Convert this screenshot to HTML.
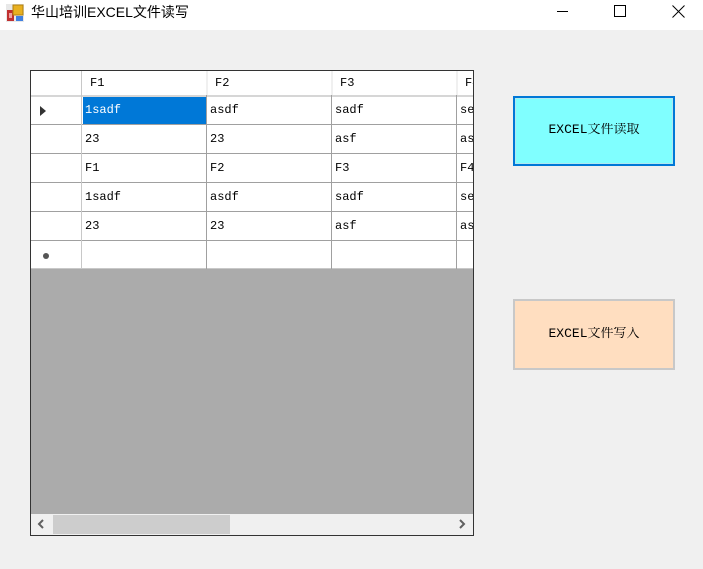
<!DOCTYPE html>
<html><head><meta charset="utf-8"><style>
*{margin:0;padding:0;box-sizing:border-box}
body{width:703px;height:569px;background:#f0f0f0;position:relative;overflow:hidden;font-family:"Liberation Mono","Noto Serif CJK SC",monospace;font-size:12px;color:#000}
.a{position:absolute}
.t{position:absolute;line-height:14px;white-space:nowrap;overflow:hidden}
</style></head><body>
<div class="a" style="left:0;top:0;width:703px;height:30px;background:#fff"></div>
<svg class="a" style="left:6px;top:4px" width="18" height="18" viewBox="0 0 18 18">
<rect x="0" y="0" width="18" height="18" fill="#e8e8e8"/>
<rect x="1" y="6" width="7" height="11" fill="#c03030"/>
<rect x="3" y="9" width="3" height="5" fill="#f0a0a0"/>
<rect x="7" y="1" width="10" height="10" fill="#e8b020" stroke="#b08010"/>
<rect x="10" y="12" width="7" height="5" fill="#4080e0"/>
</svg>
<div class="t" style="left:31px;top:3px;font-family:'Liberation Sans','Noto Sans CJK SC',sans-serif;font-size:14px;line-height:18px">华山培训EXCEL文件读写</div>
<div class="a" style="left:557px;top:11px;width:11px;height:1px;background:#000"></div>
<div class="a" style="left:614px;top:5px;width:12px;height:12px;border:1px solid #000"></div>
<svg class="a" style="left:672px;top:5px" width="13" height="13"><path d="M0.5 0.5L12.5 12.5M12.5 0.5L0.5 12.5" stroke="#000" stroke-width="1"/></svg>

<div class="a" style="left:30px;top:70px;width:444px;height:466px;border:1px solid #333;background:#ababab;overflow:hidden">
<div class="a" style="left:0;top:0;width:442px;height:198px;background:#fff"></div>
<div class="a" style="left:0;top:24px;width:442px;height:2px;background:#d6d6d6"></div>
<div class="a" style="left:0;top:53px;width:442px;height:1px;background:#a0a0a0"></div>
<div class="a" style="left:0;top:82px;width:442px;height:1px;background:#a0a0a0"></div>
<div class="a" style="left:0;top:111px;width:442px;height:1px;background:#a0a0a0"></div>
<div class="a" style="left:0;top:140px;width:442px;height:1px;background:#a0a0a0"></div>
<div class="a" style="left:0;top:169px;width:442px;height:1px;background:#a0a0a0"></div>
<div class="a" style="left:0;top:197px;width:442px;height:1px;background:#c8c8c8"></div>
<div class="a" style="left:50px;top:0;width:1px;height:198px;background:#c8c8c8"></div>
<div class="a" style="left:175px;top:0;width:1px;height:198px;background:#a0a0a0"></div>
<div class="a" style="left:300px;top:0;width:1px;height:198px;background:#a0a0a0"></div>
<div class="a" style="left:425px;top:0;width:1px;height:198px;background:#a0a0a0"></div>
<div class="a" style="left:175px;top:0;width:2px;height:24px;background:#f0f0f0"></div>
<div class="a" style="left:300px;top:0;width:2px;height:24px;background:#f0f0f0"></div>
<div class="a" style="left:425px;top:0;width:2px;height:24px;background:#f0f0f0"></div>
<div class="a" style="left:52px;top:26px;width:123px;height:27px;background:#0078d7"></div>
<div class="a" style="left:9px;top:35px;width:0;height:0;border-left:6px solid #333;border-top:5px solid transparent;border-bottom:5px solid transparent"></div>
<div class="a" style="left:12px;top:182px;width:6px;height:6px;border-radius:3px;background:#555"></div>
<div class="t" style="left:59px;top:5px">F1</div>
<div class="t" style="left:184px;top:5px">F2</div>
<div class="t" style="left:309px;top:5px">F3</div>
<div class="t" style="left:434px;top:5px">F4</div>
<div class="t" style="left:54px;top:32px;color:#fff">1sadf</div>
<div class="t" style="left:179px;top:32px">asdf</div>
<div class="t" style="left:304px;top:32px">sadf</div>
<div class="t" style="left:429px;top:32px;width:13px">sedf</div>
<div class="t" style="left:54px;top:61px">23</div>
<div class="t" style="left:179px;top:61px">23</div>
<div class="t" style="left:304px;top:61px">asf</div>
<div class="t" style="left:429px;top:61px;width:13px">asf</div>
<div class="t" style="left:54px;top:90px">F1</div>
<div class="t" style="left:179px;top:90px">F2</div>
<div class="t" style="left:304px;top:90px">F3</div>
<div class="t" style="left:429px;top:90px;width:13px">F4</div>
<div class="t" style="left:54px;top:119px">1sadf</div>
<div class="t" style="left:179px;top:119px">asdf</div>
<div class="t" style="left:304px;top:119px">sadf</div>
<div class="t" style="left:429px;top:119px;width:13px">sedf</div>
<div class="t" style="left:54px;top:148px">23</div>
<div class="t" style="left:179px;top:148px">23</div>
<div class="t" style="left:304px;top:148px">asf</div>
<div class="t" style="left:429px;top:148px;width:13px">asf</div>
<div class="a" style="left:0;top:443px;width:442px;height:21px;background:#f0f0f0"></div>
<div class="a" style="left:22px;top:444px;width:177px;height:19px;background:#cdcdcd"></div>
<svg class="a" style="left:6px;top:448px" width="8" height="10"><path d="M6 1L2 5L6 9" stroke="#606060" stroke-width="2" fill="none"/></svg>
<svg class="a" style="left:427px;top:448px" width="8" height="10"><path d="M2 1L6 5L2 9" stroke="#606060" stroke-width="2" fill="none"/></svg>
</div>

<div class="a" style="left:513px;top:96px;width:162px;height:70px;background:#80ffff;border:2px solid #0078d7;box-shadow:inset 0 0 0 1px #b0e8f0"></div>
<div class="t" style="left:513px;top:123px;width:162px;text-align:center;font-size:13px">EXCEL文件读取</div>
<div class="a" style="left:513px;top:299px;width:162px;height:71px;background:#ffdec0;border:2px solid #c8c8c8"></div>
<div class="t" style="left:513px;top:327px;width:162px;text-align:center;font-size:13px">EXCEL文件写入</div>
</body></html>
